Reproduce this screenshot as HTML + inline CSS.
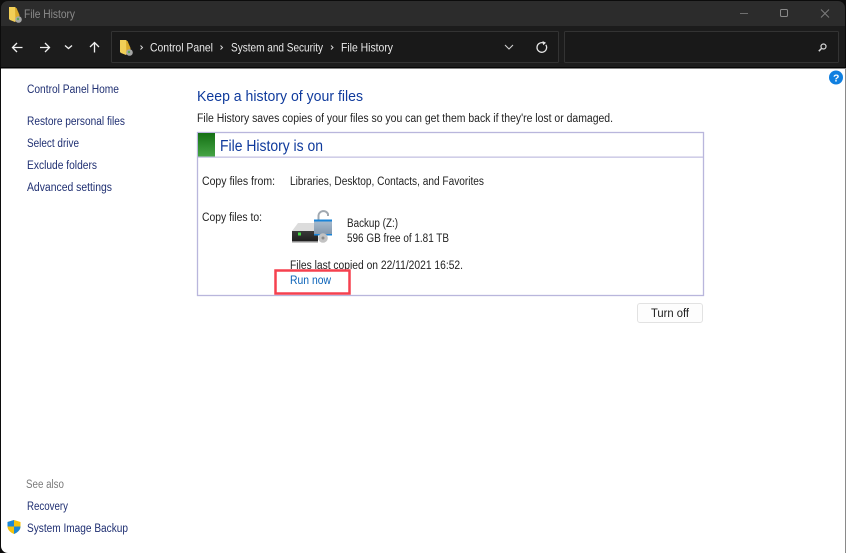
<!DOCTYPE html>
<html><head><meta charset="utf-8"><style>
html,body{margin:0;padding:0;width:846px;height:553px;overflow:hidden;background:#0c0c0c}
svg{display:block;font-family:"Liberation Sans",sans-serif;font-size:11.5px}
text{white-space:pre}
</style></head><body>
<svg width="846" height="553" viewBox="0 0 846 553" xmlns="http://www.w3.org/2000/svg">
<defs>
<linearGradient id="gr" x1="0" y1="0" x2="0" y2="1"><stop offset="0" stop-color="#157015"/><stop offset="1" stop-color="#46a546"/></linearGradient>
<linearGradient id="lk" x1="0" y1="0" x2="0" y2="1"><stop offset="0" stop-color="#a9bdd0"/><stop offset="1" stop-color="#8296ab"/></linearGradient>
<linearGradient id="dr" x1="0" y1="0" x2="0" y2="1"><stop offset="0" stop-color="#3a3a3a"/><stop offset="1" stop-color="#1c1c1c"/></linearGradient>
<g id="folder"><path d="M0 0h6l1 1v12l-1 2-5-2-1-1z" fill="#f2cf57"/><path d="M6 1h1.500l3 7v3l-4 4z" fill="#d9aa2c"/><circle cx="9.500" cy="12.500" r="3.300" fill="#a5a5a5"/><circle cx="9" cy="12" r="1.200" fill="#5aa85a"/></g>
</defs>
<!-- window -->
<path d="M0 553V8a8 8 0 0 1 8-8H838a8 8 0 0 1 8 8V553z" fill="#0c0c0c"/>
<path d="M1 26V8a7 7 0 0 1 7-7H838a7 7 0 0 1 7 7V26z" fill="#2c2c2c"/>
<rect x="1" y="26" width="844" height="41" fill="#1c1c1c"/>
<rect x="0" y="67" width="846" height="1.500" fill="#050505"/>
<path d="M1 68.500H845V553H8a7 7 0 0 1-7-7z" fill="#fff"/>
<rect x="845" y="68" width="1" height="485" fill="#8a8a8a"/>
<!-- title bar -->
<use href="#folder" x="9" y="7"/>
<text x="24" y="18" fill="#8b8b8b" style="font-size:12px" textLength="51" lengthAdjust="spacingAndGlyphs">File History</text>
<rect x="740" y="13" width="8" height="1" fill="#6f6f6f"/>
<rect x="780.500" y="9.500" width="7" height="7" rx="1.200" fill="none" stroke="#8a8a8a"/>
<path d="M821 9.500l8 8M829 9.500l-8 8" stroke="#7c7c7c" fill="none"/>
<!-- nav -->
<g fill="none" stroke="#f0f0f0" stroke-width="1.300">
<path d="M13 47.500h9.500M17 43l-4.500 4.500 4.500 4.500"/>
<path d="M40 47.500h9.500M45 43l4.500 4.500-4.500 4.500"/>
<path d="M65 45.500l3.500 3 3.500-3" stroke-width="1.300"/>
<path d="M94.500 52.500v-10M90 47l4.500-4.500L99 47"/>
</g>
<!-- address -->
<rect x="111.500" y="31.500" width="447" height="31" rx="1" fill="#191919" stroke="#333"/>
<rect x="564.500" y="31.500" width="274" height="31" rx="1" fill="#191919" stroke="#333"/>
<use href="#folder" x="120" y="40"/>
<g fill="none" stroke="#d5d5d5"><path d="M140.500 45.500l2 2-2 2M220.500 45.500l2 2-2 2M331 45.500l2 2-2 2"/></g>
<text x="150" y="51.500" style="font-size:12px" fill="#e8e8e8" textLength="63" lengthAdjust="spacingAndGlyphs">Control Panel</text>
<text x="231" y="51.500" style="font-size:12px" fill="#e8e8e8" textLength="92" lengthAdjust="spacingAndGlyphs">System and Security</text>
<text x="341" y="51.500" style="font-size:12px" fill="#e8e8e8" textLength="52" lengthAdjust="spacingAndGlyphs">File History</text>
<path d="M505 45l4 4 4-4" fill="none" stroke="#d0d0d0" stroke-width="1.100"/>
<path d="M545.800 44.800a4.800 4.800 0 1 1-2-1.700" fill="none" stroke="#e6e6e6" stroke-width="1.300"/>
<path d="M542.500 41l3.500 1.800-2.800 2.500z" fill="#e6e6e6"/>
<circle cx="823.500" cy="46.500" r="2.500" fill="none" stroke="#d5d5d5" stroke-width="1.200"/>
<path d="M821.500 48.500l-2.700 2.700" stroke="#d5d5d5" stroke-width="1.500"/>
<!-- help -->
<circle cx="836" cy="77.500" r="7" fill="#0f7fe0"/>
<text x="833" y="81.500" fill="#fff" style="font-size:10.500px" font-weight="bold">?</text>
<!-- left nav -->
<text x="27" y="93" fill="#1f2f72" textLength="92" lengthAdjust="spacingAndGlyphs">Control Panel Home</text>
<text x="27" y="125" fill="#1f2f72" textLength="98" lengthAdjust="spacingAndGlyphs">Restore personal files</text>
<text x="27" y="147" fill="#1f2f72" textLength="52" lengthAdjust="spacingAndGlyphs">Select drive</text>
<text x="27" y="169" fill="#1f2f72" textLength="70" lengthAdjust="spacingAndGlyphs">Exclude folders</text>
<text x="27" y="191" fill="#1f2f72" textLength="85" lengthAdjust="spacingAndGlyphs">Advanced settings</text>
<text x="26" y="488" fill="#7a7a7a" textLength="38" lengthAdjust="spacingAndGlyphs">See also</text>
<text x="27" y="510" fill="#1f2f72" textLength="41" lengthAdjust="spacingAndGlyphs">Recovery</text>
<text x="27" y="532" fill="#1f2f72" textLength="101" lengthAdjust="spacingAndGlyphs">System Image Backup</text>
<!-- shield -->
<path d="M14 520l6.500 2v4.500c0 3.500-3 6-6.500 7.500-3.500-1.500-6.500-4-6.500-7.500V522z" fill="#f4c20d"/>
<path d="M14 520l-6.500 2v4.500H14zM14 526.500V534c3.500-1.500 6.500-4 6.500-7.500z" fill="#1b87d6"/>
<!-- main -->
<text x="197" y="101" fill="#0f3a9c" style="font-size:15px" textLength="166" lengthAdjust="spacingAndGlyphs">Keep a history of your files</text>
<text x="197" y="122" fill="#222" textLength="416" lengthAdjust="spacingAndGlyphs">File History saves copies of your files so you can get them back if they're lost or damaged.</text>
<rect x="197.500" y="132.500" width="506" height="163" fill="#fff" stroke="#b9b6dc" stroke-width="1.300"/>
<rect x="198" y="133" width="17" height="24" fill="url(#gr)"/>
<rect x="198" y="156.500" width="505" height="1.300" fill="#c4c2e2"/>
<text x="220" y="151" fill="#0f3a9c" style="font-size:15.500px" textLength="103" lengthAdjust="spacingAndGlyphs">File History is on</text>
<text x="202" y="185" fill="#222" textLength="73" lengthAdjust="spacingAndGlyphs">Copy files from:</text>
<text x="290" y="185" fill="#222" textLength="194" lengthAdjust="spacingAndGlyphs">Libraries, Desktop, Contacts, and Favorites</text>
<text x="202" y="221" fill="#222" textLength="60" lengthAdjust="spacingAndGlyphs">Copy files to:</text>
<!-- drive icon -->
<path d="M292 231l6-8h22v8z" fill="#dcdcdc"/>
<rect x="292" y="231" width="26" height="11" fill="url(#dr)"/>
<rect x="292" y="241" width="26" height="1.500" fill="#888"/>
<rect x="298" y="232.500" width="3" height="3" fill="#43d843"/>
<path d="M318.500 220v-4.500a5 5 0 0 1 9.500-1.500v2" fill="none" stroke="#a0a8b0" stroke-width="2"/>
<rect x="314" y="220" width="18" height="15" fill="url(#lk)"/>
<rect x="314" y="219.500" width="18" height="2" fill="#1a84d8"/>
<rect x="314" y="234" width="18" height="1.500" fill="#1a84d8"/>
<circle cx="323" cy="238" r="4.800" fill="#c2c2c2"/>
<circle cx="323" cy="238" r="1.500" fill="#8a8a8a"/>
<text x="347" y="227" fill="#222" textLength="51" lengthAdjust="spacingAndGlyphs">Backup (Z:)</text>
<text x="347" y="242" fill="#222" textLength="102" lengthAdjust="spacingAndGlyphs">596 GB free of 1.81 TB</text>
<text x="290" y="269" fill="#222" textLength="173" lengthAdjust="spacingAndGlyphs">Files last copied on 22/11/2021 16:52.</text>
<text x="290" y="284" fill="#0a62b8" textLength="41" lengthAdjust="spacingAndGlyphs">Run now</text>
<rect x="275.500" y="270.500" width="74" height="23" fill="none" stroke="#f5414f" stroke-width="2.500"/>
<!-- button -->
<rect x="637.500" y="303.500" width="65" height="19" rx="2.500" fill="#fdfdfd" stroke="#e2e2e2"/>
<text x="651" y="317" fill="#1a1a1a" textLength="38" lengthAdjust="spacingAndGlyphs">Turn off</text>
</svg>
</body></html>
